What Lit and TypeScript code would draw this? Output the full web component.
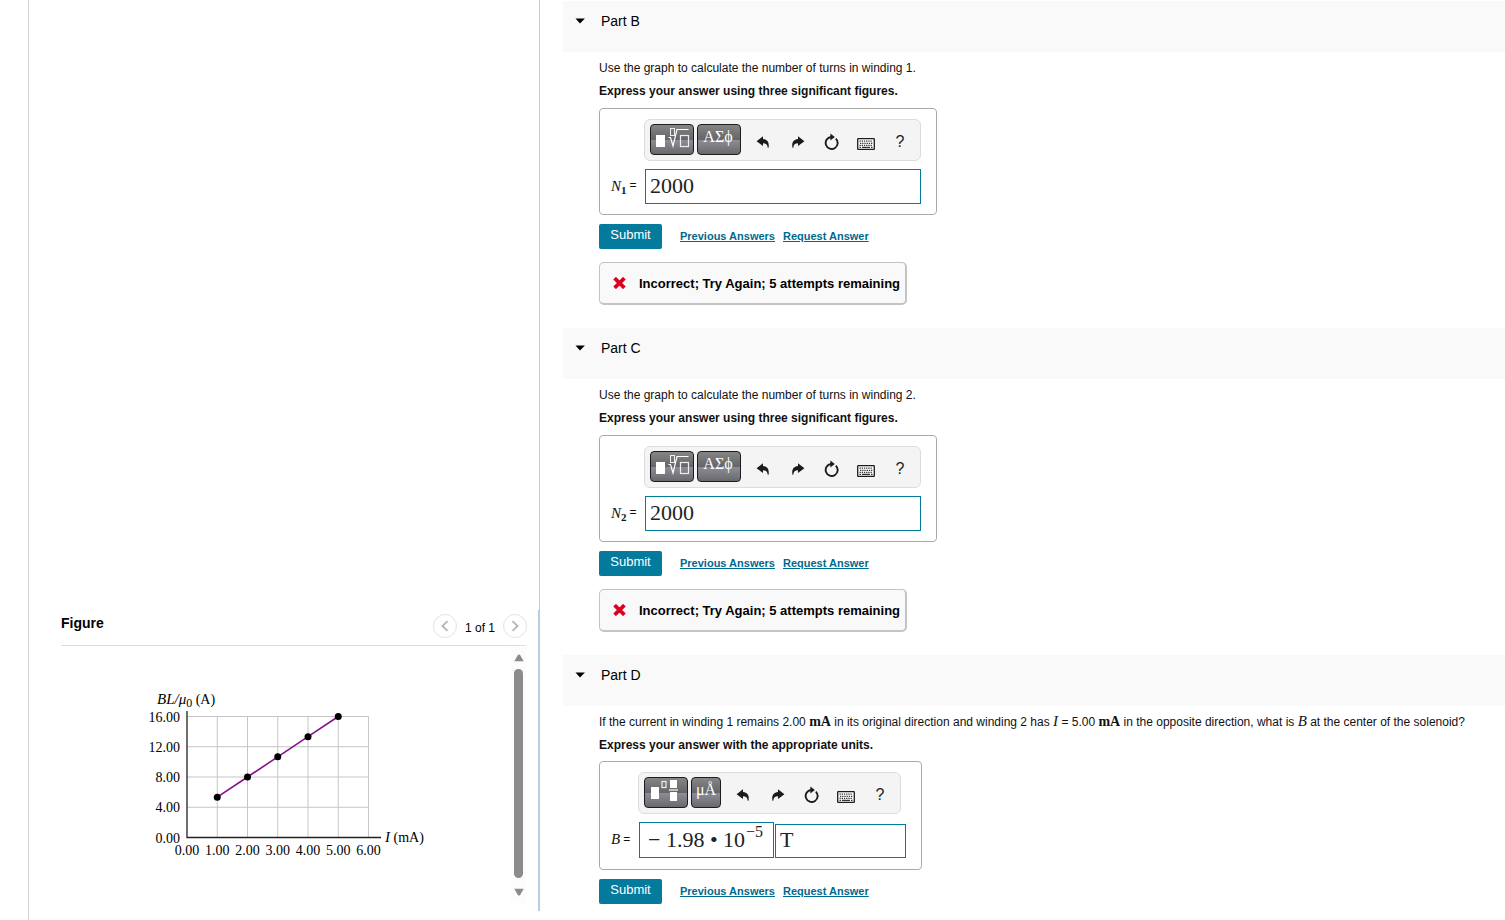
import { LitElement, html, svg, css } from "lit";
import { customElement, property } from "lit/decorators.js";

const undoIcon = html`<svg width="16" height="16" viewBox="1 0 16 16" aria-hidden="true">
  <path fill="#1b1b1b" d="M1.600 7.200 8 2.200v2.900c4.200.5 6.400 2.900 5.600 8.400-.3.5-.8.500-.9 0-.2-2.700-1.700-4.200-4.700-4.200v2.700z" /></svg>`;

const redoIcon = html`<svg width="16" height="16" viewBox="0 0 16 16" aria-hidden="true">
  <path fill="#1b1b1b" d="M14.400 7.200 8 2.200v2.900c-4.200.5-6.400 2.900-5.600 8.400.3.500.8.500.9 0 .2-2.700 1.700-4.200 4.700-4.200v2.700z" /></svg>`;

const resetIcon = html`<svg width="16" height="18" viewBox="0 0 16 18" aria-hidden="true">
  <path fill="none" stroke="#1b1b1b" stroke-width="1.900" d="M11.800 5.600A6 6 0 1 1 7 4" />
  <path fill="#1b1b1b" d="M6.400 .6 10.800 4 6.400 7.400z" /></svg>`;

const keyboardIcon = html`<svg width="18" height="12" viewBox="0 0 18 12" aria-hidden="true">
  <rect x=".7" y=".7" width="16.600" height="10.600" rx=".6" fill="#fff" stroke="#1b1b1b" stroke-width="1.300" />
  <path stroke="#333" stroke-width="1.200" stroke-dasharray="1.300 .9" d="M2.500 3.200h13M3 5.400h12.500M2.500 7.400h13" />
  <path stroke="#333" stroke-width="1.200" d="M2.500 9.400h1.500M5 9.400h8M14 9.400h1.500" /></svg>`;

const rootIcon = html`<svg width="36" height="24" viewBox="0 0 36 24" aria-hidden="true">
  <rect x="2" y="8" width="9" height="12" fill="#fff" />
  <rect x="16.500" y="1.500" width="4" height="7" fill="none" stroke="#eee" />
  <path fill="none" stroke="#fff" stroke-width="1.200" d="M14.500 10.500h2l2.500 8.500 4-16.500h11.500" />
  <rect x="26.500" y="8.500" width="8" height="11" fill="none" stroke="#eee" stroke-width="1.200" /></svg>`;

const templateIcon = html`<svg width="36" height="24" viewBox="0 0 36 24" aria-hidden="true">
  <rect x="3" y="7" width="8" height="12" fill="#fff" />
  <rect x="14" y="1.500" width="4" height="6" fill="none" stroke="#eee" stroke-width="1.200" />
  <rect x="22" y="0" width="7" height="8" fill="#fff" />
  <path stroke="#fff" stroke-width="1.200" d="M21 10h9" />
  <rect x="22" y="12" width="7" height="9" fill="#fff" /></svg>`;

const chevron = (d: string) => html`<svg width="10" height="12" viewBox="0 0 10 12" aria-hidden="true">
  <path fill="none" stroke="#b5b5b5" stroke-width="1.800" d=${d} /></svg>`;

@customElement("math-toolbar")
export class MathToolbar extends LitElement {
  @property({ type: Boolean }) units = false;

  static styles = css`
    :host { display: block; }
    .bar {
      display: flex; align-items: flex-start; box-sizing: border-box; height: 42px;
      padding: 4px 0 0 5px; border: 1px solid #dcdcdc; border-radius: 6px; background: #f4f4f4;
    }
    button { margin: 0; padding: 0; cursor: pointer; font-family: "Liberation Sans", Arial, sans-serif; }
    .palette {
      display: flex; justify-content: center; align-items: flex-start; box-sizing: border-box;
      width: 44px; height: 31px; margin-right: 3px; padding: 2px 0 0;
      border: 1px solid #1d1d1d; border-radius: 4px; color: #fff;
      background: linear-gradient(#858585 0, #66666a 50%, #8d8d99 51%, #69696c 100%);
      font: 16px/20px "Liberation Serif", "Times New Roman", serif;
    }
    .narrow { width: 30px; }
    .greek { padding-right: 2px; }
    .tool {
      display: grid; place-items: center; width: 34px; height: 36px;
      border: 0; background: none; color: #1b1b1b; font-size: 16px;
    }
    .first { margin-left: 3px; }
    .keys { padding-top: 4px; }
  `;

  render() {
    return html`<div class="bar" role="toolbar" aria-label="Math tools">
      <button class="palette" aria-label="Templates">${this.units ? templateIcon : rootIcon}</button>
      ${this.units
        ? html`<button class="palette narrow" aria-label="Units">μÅ</button>`
        : html`<button class="palette greek" aria-label="Symbols">ΑΣϕ</button>`}
      <button class="tool first" aria-label="Undo">${undoIcon}</button>
      <button class="tool" aria-label="Redo">${redoIcon}</button>
      <button class="tool" aria-label="Reset">${resetIcon}</button>
      <button class="tool keys" aria-label="Keyboard shortcuts">${keyboardIcon}</button>
      <button class="tool" aria-label="Help">?</button>
    </div>`;
  }
}

@customElement("problem-part")
export class ProblemPart extends LitElement {
  @property() name = "";
  @property() prompt: unknown = "";
  @property() instruction = "";
  @property() symbol: unknown = "";
  @property({ type: Boolean }) units = false;
  @property() feedback = "";

  static styles = css`
    :host { display: block; font: 12px/23px "Liberation Sans", Arial, sans-serif; color: #111; }
    h2 { margin: 0; height: 51px; background: #f9f9f9; font-weight: 400; }
    .toggle {
      display: flex; align-items: center; gap: 16px; height: 40px; padding: 0 12px;
      border: 0; background: none; color: #000; font: 14px/20px "Liberation Sans", Arial, sans-serif; cursor: pointer;
    }
    .body { padding: 5px 0 23px 36px; }
    p { margin: 0; }
    .strong { font-weight: 700; }
    var, .math { font-family: "Liberation Serif", "Times New Roman", serif; font-size: 15px; line-height: 20px; }
    .unit { font-family: "Liberation Serif", "Times New Roman", serif; font-size: 14px; line-height: 20px; font-weight: 700; }
    .answer {
      box-sizing: border-box; width: 338px; margin-top: 5px; padding: 10px 15px 10px 11px;
      border: 1px solid #aaa; border-radius: 4px;
      display: grid; grid-template-columns: 34px minmax(0, 1fr); row-gap: 8px;
    }
    .with-units { width: 323px; grid-template-columns: 28px minmax(0, 1fr) 5px; margin-top: 4px; padding-bottom: 11px; }
    .tools { grid-column: 2; margin-left: -1px; }
    label { grid-column: 1; display: flex; align-items: center; gap: 3px; padding-bottom: 2px; white-space: nowrap; }
    sub { font-size: 11px; line-height: 0; vertical-align: -3px; font-style: normal; font-weight: 700; }
    input {
      box-sizing: border-box; min-width: 0; width: 100%; height: 35px; margin: 0; padding: 0 4px 2px;
      border: 1px solid #047a9c; border-radius: 0; outline: 0; background: #fff; color: #222;
      font: 22px/30px "Liberation Serif", "Times New Roman", serif;
    }
    .fields { grid-column: 2 / 4; display: flex; align-items: flex-end; gap: 1px; }
    .formula { box-sizing: border-box; display: flex; width: 135px; height: 36px; padding: 0 3px 0 8px; border: 1px solid #047a9c; }
    .formula input { border: 0; padding: 0; height: 34px; background: none; }
    .formula .base { width: 98px; }
    .formula .exponent { flex: 1; height: 18px; font-size: 16px; line-height: 18px; }
    .unit-field { width: 131px; height: 34px; }
    .actions { display: flex; align-items: center; margin-top: 9px; font-size: 11px; font-weight: 700; line-height: 25px; }
    .submit {
      width: 63px; height: 25px; margin: 0 18px 0 0; padding: 0 0 4px; border: 0; border-radius: 2px;
      background: #047a9c; color: #fff; font: 13px/20px "Liberation Sans", Arial, sans-serif; cursor: pointer;
    }
    a { margin-right: 8px; color: #006a8e; }
    .feedback {
      display: inline-flex; align-items: center; gap: 13px; box-sizing: border-box; height: 43px;
      margin-top: 13px; padding: 0 5px 0 13px; border: 1px solid #c4c4c4; border-right-width: 2px; border-bottom-width: 2px;
      border-radius: 5px; background: #f9f9f9; color: #000; font-size: 13px; font-weight: 700; vertical-align: top;
    }
  `;

  render() {
    return html`<section>
      <h2><button class="toggle" aria-expanded="true">
        <svg width="10" height="6" viewBox="0 0 10 6" aria-hidden="true"><path d="M.5.5h9.400L5 5.500z" /></svg>${this.name}
      </button></h2>
      <div class="body">
        <p>${this.prompt}</p>
        <p class="strong">${this.instruction}</p>
        <div class="answer ${this.units ? "with-units" : ""}">
          <div class="tools"><math-toolbar ?units=${this.units}></math-toolbar></div>
          <label for="value">${this.symbol}<span>=</span></label>
          ${this.units
            ? html`<div class="fields">
                <div class="formula">
                  <input id="value" class="base" value="− 1.98 • 10" />
                  <input class="exponent" aria-label="Exponent" value="−5" />
                </div>
                <input class="unit-field" aria-label="Units" value="T" />
              </div>`
            : html`<input id="value" value="2000" />`}
        </div>
        <div class="actions">
          <button class="submit">Submit</button>
          <a href="#previous">Previous Answers</a>
          <a href="#request">Request Answer</a>
        </div>
        ${this.feedback
          ? html`<div class="feedback" role="status">
              <svg width="13" height="12" viewBox="0 0 13 12" aria-hidden="true">
                <path stroke="#db0020" stroke-width="3.800" d="M1.600 1.200 11.400 10.800M11.400 1.200 1.600 10.800" /></svg>
              <span>${this.feedback}</span>
            </div>`
          : ""}
      </div>
    </section>`;
  }
}

const STEP = 30.25;
const ORIGIN_X = 47;
const ORIGIN_Y = 147.5;
const POINTS = [1, 2, 3, 4, 5].map((i) => [i, (i + 1) * (16 / 6)]);

@customElement("figure-panel")
export class FigurePanel extends LitElement {
  static styles = css`
    :host { display: block; font-family: "Liberation Sans", Arial, sans-serif; color: #000; }
    header {
      display: flex; justify-content: space-between; align-items: flex-start; box-sizing: border-box;
      height: 36px; margin: 0 12px 0 32px; border-bottom: 1px solid #dcdcdc;
    }
    h2 { margin: 3px 0 0; font-size: 14px; line-height: 20px; }
    .pager { display: flex; align-items: center; gap: 8px; margin: 4px -1px 0 0; font-size: 12px; line-height: 28px; }
    .pager span { height: 24px; }
    .pager button {
      display: grid; place-items: center; width: 24px; height: 24px; padding: 0;
      border: 1px solid #e3e3e3; border-radius: 50%; background: #fff; cursor: pointer;
    }
    .view { display: flex; justify-content: space-between; height: 256px; margin: 1px 12px 0 32px; }
    .plot { display: block; margin: 43px 0 0 79px; }
    .plot text { font: 14px "Liberation Serif", "Times New Roman", serif; fill: #000; }
    .plot .i { font-style: italic; font-size: 15px; }
    .plot .s { font-size: 12px; }
    .scroll {
      display: flex; flex-direction: column; align-items: center; justify-content: space-between;
      box-sizing: border-box; width: 15px; padding: 7px 0; background: #fcfcfc;
    }
    .thumb { width: 9px; flex: 1; margin: 7px 0 10px; border-radius: 5px; background: #8b8b8b; }
    .arrow { display: block; }
  `;

  private x(i: number) { return ORIGIN_X + i * STEP; }
  private y(v: number) { return ORIGIN_Y - (v / 4) * STEP; }

  render() {
    const cols = [0, 1, 2, 3, 4, 5, 6];
    const rows = [0, 4, 8, 12, 16];
    return html`<header>
        <h2>Figure</h2>
        <div class="pager">
          <button aria-label="Previous figure">${chevron("M7.500 1.200 2.500 6l5 4.800")}</button>
          <span>1 of 1</span>
          <button aria-label="Next figure">${chevron("M2.500 1.200 7.500 6l-5 4.800")}</button>
        </div>
      </header>
      <div class="view">
        <svg class="plot" width="290" height="176" viewBox="0 0 290 176" role="img" aria-label="BL/μ0 against I">
          ${cols.slice(1).map((i) => svg`<path stroke="#c6c6c6" d="M${this.x(i)} ${this.y(16)}V${ORIGIN_Y}" />`)}
          ${rows.slice(1).map((v) => svg`<path stroke="#c6c6c6" d="M${ORIGIN_X} ${this.y(v)}H${this.x(6)}" />`)}
          <path fill="none" stroke="#222" stroke-width="1.300" d="M47 21V147.500H241" />
          <path fill="none" stroke="#84128c" stroke-width="1.600" d=${"M" + POINTS.map(([i, v]) => `${this.x(i)} ${this.y(v)}`).join("L")} />
          ${POINTS.map(([i, v]) => svg`<circle cx=${this.x(i)} cy=${this.y(v)} r="3.500" />`)}
          ${rows.map((v) => svg`<text x="40" y=${this.y(v) + 5} text-anchor="end">${v.toFixed(2)}</text>`)}
          ${cols.map((i) => svg`<text x=${this.x(i)} y="165" text-anchor="middle">${i.toFixed(2)}</text>`)}
          <text x="17" y="14"><tspan class="i">BL/μ</tspan><tspan class="s" dy="3">0</tspan><tspan dy="-3"> (A)</tspan></text>
          <text x="245" y="152"><tspan class="i">I</tspan> (mA)</text>
        </svg>
        <div class="scroll" aria-hidden="true">
          <svg class="arrow" width="10" height="8" viewBox="0 0 10 8"><path fill="#8b8b8b" d="M4 .8Q5 0 6 .8L9.700 7.200H.3z" /></svg>
          <div class="thumb"></div>
          <svg class="arrow" width="10" height="8" viewBox="0 0 10 8"><path fill="#8b8b8b" d="M.3.8h9.400L6 7.200Q5 8 4 7.200z" /></svg>
        </div>
      </div>`;
  }
}

@customElement("app-root")
export class AppRoot extends LitElement {
  static styles = css`
    :host { display: block; background: #fff; }
    .page {
      display: grid; grid-template: minmax(0, 1fr) / 512fr 965fr; box-sizing: border-box;
      height: 100vh; padding-left: 28px; overflow: hidden;
    }
    .left { display: flex; flex-direction: column; border-left: 1px solid #d2d2d2; padding-bottom: 9px; min-width: 0; }
    .text-pane { flex: 1; border-right: 1px solid #cbcbcb; }
    .figure { padding-bottom: 8px; border-right: 2px solid #b9cde0; }
    .right { min-width: 0; padding: 1px 0 0 23px; }
    var, .unit { font-family: "Liberation Serif", "Times New Roman", serif; }
  `;

  render() {
    const useGraph = (n: number) => `Use the graph to calculate the number of turns in winding ${n}.`;
    const figures = "Express your answer using three significant figures.";
    const retry = "Incorrect; Try Again; 5 attempts remaining";
    return html`<div class="page">
      <aside class="left">
        <div class="text-pane"></div>
        <figure-panel class="figure"></figure-panel>
      </aside>
      <main class="right">
        <problem-part name="Part B" .prompt=${useGraph(1)} instruction=${figures}
          .symbol=${html`<span class="math"><var>N</var><sub>1</sub></span>`} feedback=${retry}></problem-part>
        <problem-part name="Part C" .prompt=${useGraph(2)} instruction=${figures}
          .symbol=${html`<span class="math"><var>N</var><sub>2</sub></span>`} feedback=${retry}></problem-part>
        <problem-part name="Part D" units
          .prompt=${html`If the current in winding 1 remains 2.00 <span class="unit">mA</span> in its original direction and winding 2 has <var>I</var> = 5.00 <span class="unit">mA</span> in the opposite direction, what is <var>B</var> at the center of the solenoid?`}
          instruction="Express your answer with the appropriate units."
          .symbol=${html`<var>B</var>`}></problem-part>
      </main>
    </div>`;
  }
}
